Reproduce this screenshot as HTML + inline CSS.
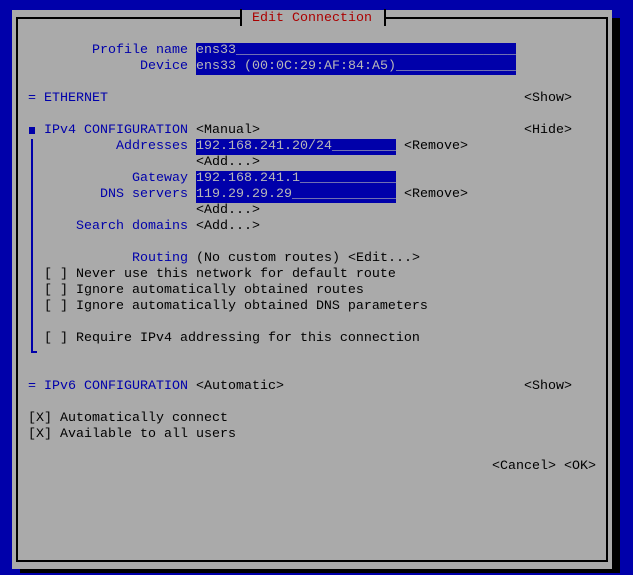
<!DOCTYPE html>
<html><head><meta charset="utf-8"><style>
html,body{margin:0;padding:0;}
body{width:633px;height:573px;background:#0000aa;position:relative;overflow:hidden;font-family:"Liberation Mono","DejaVu Sans Mono",monospace;font-size:13.33px;}
.p{position:absolute;background:#aaaaaa;left:12px;top:10px;width:600px;height:559px;}
.sh1{position:absolute;background:#000;left:612px;top:18px;width:8px;height:555px;}
.sh2{position:absolute;background:#000;left:20px;top:569px;width:600px;height:4px;}
.l{position:absolute;background:#000;}
.t{position:absolute;white-space:pre;line-height:16px;height:16px;color:#000;}
.b{color:#0000aa;}
.f{background:#0000aa;color:#b8b8b8;}
.r{color:#aa0000;}
.w{position:absolute;left:0;top:2px;width:633px;height:573px;}
</style></head><body>
<div class="p"></div><div class="sh1"></div><div class="sh2"></div>
<div class="l" style="left:16px;top:17px;width:2px;height:545px"></div>
<div class="l" style="left:16px;top:17px;width:592px;height:2px"></div>
<div class="l" style="left:606px;top:17px;width:2px;height:545px"></div>
<div class="l" style="left:16px;top:560px;width:592px;height:2px"></div>
<div class="l" style="left:240px;top:9px;width:2px;height:17px"></div>
<div class="l" style="left:384px;top:9px;width:2px;height:17px"></div>
<div style="position:absolute;left:242px;top:10px;width:142px;height:16px;background:#aaaaaa"></div>
<div class="w">
<div class="t r" style="left:252px;top:9px">Edit Connection</div>

<div class="t b" style="left:92px;top:41px">Profile name</div>
<div class="t f" style="left:196px;top:41px;width:320px">ens33___________________________________</div>
<div class="t b" style="left:140px;top:57px">Device</div>
<div class="t f" style="left:196px;top:57px;width:320px">ens33 (00:0C:29:AF:84:A5)_______________</div>

<div class="t b" style="left:28px;top:89px">= ETHERNET</div>
<div class="t" style="left:524px;top:89px">&lt;Show&gt;</div>

<div class="l" style="left:29px;top:125px;width:6px;height:7px;background:#0000aa"></div>
<div class="t b" style="left:44px;top:121px">IPv4 CONFIGURATION</div>
<div class="t" style="left:196px;top:121px">&lt;Manual&gt;</div>
<div class="t" style="left:524px;top:121px">&lt;Hide&gt;</div>
<div class="l" style="left:31px;top:137px;width:2px;height:214px;background:#0000aa"></div>
<div class="l" style="left:31px;top:349px;width:6px;height:2px;background:#0000aa"></div>

<div class="t b" style="left:116px;top:137px">Addresses</div>
<div class="t f" style="left:196px;top:137px;width:200px">192.168.241.20/24________</div>
<div class="t" style="left:404px;top:137px">&lt;Remove&gt;</div>
<div class="t" style="left:196px;top:153px">&lt;Add...&gt;</div>
<div class="t b" style="left:132px;top:169px">Gateway</div>
<div class="t f" style="left:196px;top:169px;width:200px">192.168.241.1____________</div>
<div class="t b" style="left:100px;top:185px">DNS servers</div>
<div class="t f" style="left:196px;top:185px;width:200px">119.29.29.29_____________</div>
<div class="t" style="left:404px;top:185px">&lt;Remove&gt;</div>
<div class="t" style="left:196px;top:201px">&lt;Add...&gt;</div>
<div class="t b" style="left:76px;top:217px">Search domains</div>
<div class="t" style="left:196px;top:217px">&lt;Add...&gt;</div>
<div class="t b" style="left:132px;top:249px">Routing</div>
<div class="t" style="left:196px;top:249px">(No custom routes) &lt;Edit...&gt;</div>
<div class="t" style="left:44px;top:265px">[ ] Never use this network for default route</div>
<div class="t" style="left:44px;top:281px">[ ] Ignore automatically obtained routes</div>
<div class="t" style="left:44px;top:297px">[ ] Ignore automatically obtained DNS parameters</div>
<div class="t" style="left:44px;top:329px">[ ] Require IPv4 addressing for this connection</div>

<div class="t b" style="left:28px;top:377px">= IPv6 CONFIGURATION</div>
<div class="t" style="left:196px;top:377px">&lt;Automatic&gt;</div>
<div class="t" style="left:524px;top:377px">&lt;Show&gt;</div>

<div class="t" style="left:28px;top:409px">[X] Automatically connect</div>
<div class="t" style="left:28px;top:425px">[X] Available to all users</div>
<div class="t" style="left:492px;top:457px">&lt;Cancel&gt; &lt;OK&gt;</div>
</div>
</body></html>
